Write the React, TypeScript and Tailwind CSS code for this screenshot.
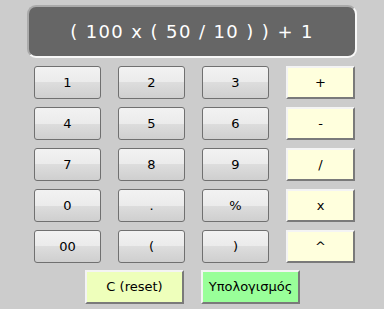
const grayBtn =
  "h-[33px] rounded-[3px] border border-[#707070] bg-[linear-gradient(#f2f2f2_0%,#ebebeb_50%,#dddddd_50%,#cfcfcf_100%)] text-[13px] text-black";
const opBtn =
  "h-[33px] border-2 border-t-[#f4f4f4] border-l-[#f4f4f4] border-r-[#7a7a7a] border-b-[#7a7a7a] bg-[#ffffdd] text-[13px] text-black";

const rows = [
  ["1", "2", "3", "+"],
  ["4", "5", "6", "-"],
  ["7", "8", "9", "/"],
  ["0", ".", "%", "x"],
  ["00", "(", ")", "^"],
];

export default function App() {
  return (
    <div className="h-[309px] w-[384px] bg-[#cccccc] pt-[5px] font-['DejaVu_Sans','Verdana',sans-serif]">
      <div className="ml-[27px] flex h-[53px] w-[330px] items-center justify-center rounded-[9px] border-2 border-t-[#aaaaaa] border-l-[#aaaaaa] border-r-[#f8f8f8] border-b-[#f8f8f8] bg-[#666666] text-[18px] tracking-[1.4px] text-white">
        ( 100 x ( 50 / 10 ) ) + 1
      </div>

      <div className="ml-[34px] mt-[8px] grid w-[322px] grid-cols-[67px_67px_67px_69px] gap-x-[17px] gap-y-[8px]">
        {rows.map((row) =>
          row.map((k, i) => (
            <button key={k} className={i === 3 ? opBtn : grayBtn}>
              {k}
            </button>
          ))
        )}
      </div>

      <div className="mt-[7px] flex justify-center gap-[17px] pl-[1px]">
        <button className="h-[34px] w-[99px] border-2 border-t-[#f4f4f4] border-l-[#f4f4f4] border-r-[#7a7a7a] border-b-[#7a7a7a] bg-[#eeffbb] text-[13px] text-black">
          C (reset)
        </button>
        <button className="h-[34px] w-[99px] border-2 border-t-[#f4f4f4] border-l-[#f4f4f4] border-r-[#7a7a7a] border-b-[#7a7a7a] bg-[#99ff99] text-[13px] text-black">
          Υπολογισμός
        </button>
      </div>
    </div>
  );
}
